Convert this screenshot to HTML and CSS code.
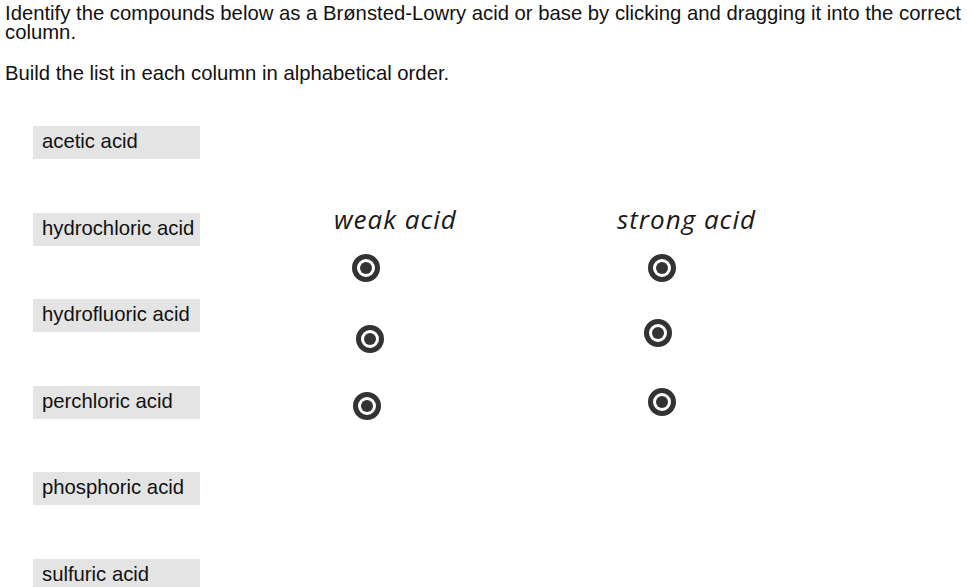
FILE: index.html
```html
<!DOCTYPE html>
<html lang="en">
<head>
    <meta charset="UTF-8">
    <meta name="viewport" content="width=device-width, initial-scale=1.0">
    <title>Brønsted-Lowry Sorting</title>
    <link rel="stylesheet" href="styles.css">
</head>
<body>
    <div class="prompt">
        <p>Identify the compounds below as a Brønsted-Lowry acid or base by clicking and dragging it into the correct column.</p>
        <p>Build the list in each column in alphabetical order.</p>
    </div>

    <div class="board">
        <!-- Draggable compounds -->
        <ul class="bank">
            <li class="chip">acetic acid</li>
            <li class="chip">hydrochloric acid</li>
            <li class="chip">hydrofluoric acid</li>
            <li class="chip">perchloric acid</li>
            <li class="chip">phosphoric acid</li>
            <li class="chip">sulfuric acid</li>
        </ul>

        <!-- Drop columns -->
        <div class="column weak">
            <h3 class="column-title">weak acid</h3>
            <span class="target"></span>
            <span class="target"></span>
            <span class="target"></span>
        </div>
        <div class="column strong">
            <h3 class="column-title">strong acid</h3>
            <span class="target"></span>
            <span class="target"></span>
            <span class="target"></span>
        </div>
    </div>
</body>
</html>
```

FILE: styles.css
```css
html {
    height: 100%;
    overflow: hidden;
}
body {
    margin: 0;
    padding: 0;
    height: 100%;
    background-color: #fff;
    color: #111;
    font-family: "Liberation Sans", Arial, sans-serif;
    font-size: 20.3px;
    line-height: 19px;
    overflow: hidden;
}
.prompt {
    padding: 4px 0 0 5px;
}
.prompt p {
    margin: 0 0 22px;
}
.board {
    display: flex;
    align-items: flex-start;
    margin-top: 43px;
}
.bank {
    list-style: none;
    margin: 0 0 0 33px;
    padding: 0;
    width: 167px;
}
.chip {
    background-color: #e4e4e4;
    padding: 6px 9px 8px;
    margin-bottom: 53.5px;
    white-space: nowrap;
}
.chip:last-child {
    margin-bottom: 0;
}
.column {
    display: flex;
    flex-direction: column;
    align-items: flex-start;
    margin-top: 78px;
}
.column.weak {
    margin-left: 134px;
    width: 150px;
}
.column.strong {
    margin-left: 133px;
}
.column-title {
    margin: 0;
    font-family: "Open Sans", sans-serif;
    font-style: italic;
    font-weight: normal;
    font-size: 26px;
    line-height: 30px;
    letter-spacing: 1px;
    white-space: nowrap;
    color: #1a1a1a;
}
.target {
    position: relative;
    display: block;
    width: 18px;
    height: 18px;
    border: 5px solid #333;
    border-radius: 50%;
}
.target::after {
    content: "";
    position: absolute;
    top: 3px;
    left: 3px;
    width: 12px;
    height: 12px;
    border-radius: 50%;
    background-color: #333;
}
.weak .target:nth-of-type(1) { margin: 20px 0 0 18px; }
.weak .target:nth-of-type(2) { margin: 43px 0 0 22px; }
.weak .target:nth-of-type(3) { margin: 39px 0 0 19px; }
.strong .target:nth-of-type(1) { margin: 20px 0 0 31px; }
.strong .target:nth-of-type(2) { margin: 37px 0 0 27px; }
.strong .target:nth-of-type(3) { margin: 41px 0 0 31px; }
```
